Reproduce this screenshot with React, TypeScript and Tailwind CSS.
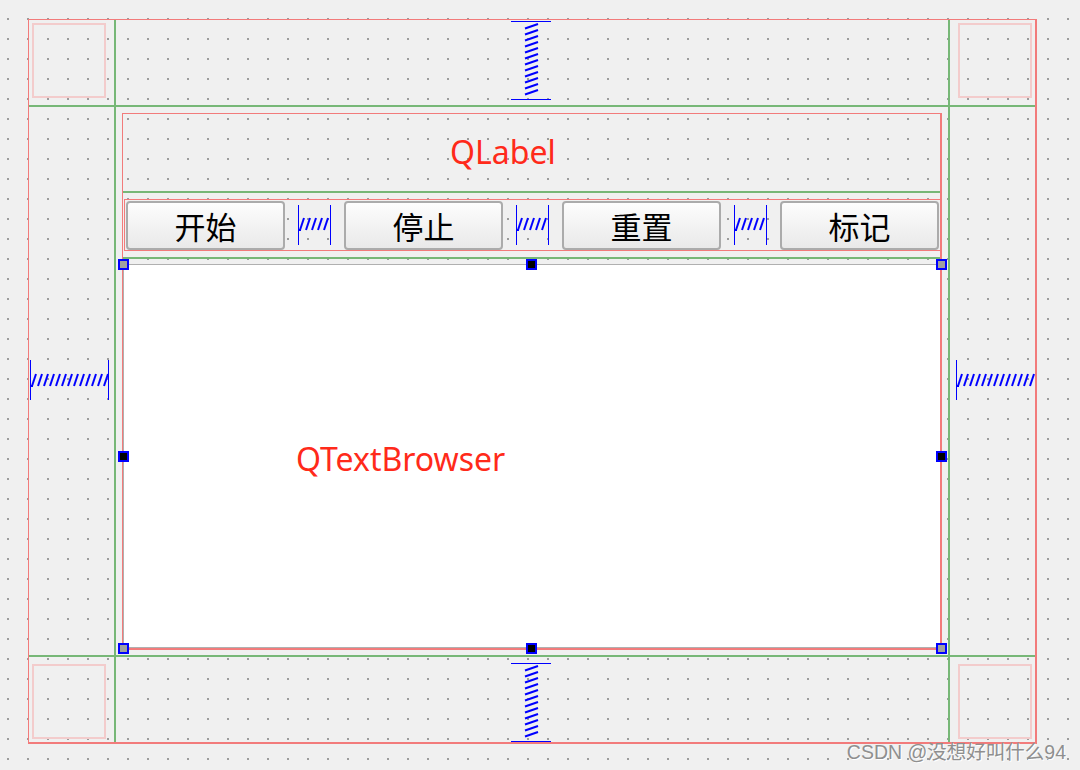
import React from "react";

const BLUE = "#0000ff";

function HSpring({ w, h, zTop, zH }: { w: number; h: number; zTop: number; zH: number }) {
  const strokes: React.ReactNode[] = [];
  for (let i = 0; 2 + i * 6 + 4 <= w - 1; i++) {
    const x = 2 + i * 6;
    strokes.push(<line key={i} x1={x} y1={zTop + zH} x2={x + 4} y2={zTop} />);
  }
  return (
    <svg width={w} height={h} className="block">
      <line x1={0.5} y1={0} x2={0.5} y2={h} stroke={BLUE} strokeWidth={1} />
      <line x1={w - 0.5} y1={0} x2={w - 0.5} y2={h} stroke={BLUE} strokeWidth={1} />
      <line x1={1} y1={zTop + zH} x2={3} y2={zTop + zH} stroke={BLUE} strokeWidth={2} />
      <g stroke={BLUE} strokeWidth={2}>{strokes}</g>
    </svg>
  );
}

function VSpring({ w, h, zLeft, zW }: { w: number; h: number; zLeft: number; zW: number }) {
  const strokes: React.ReactNode[] = [];
  for (let i = 0; 3 + i * 6 + 4.5 <= h - 1; i++) {
    const y = 3 + i * 6;
    strokes.push(<line key={i} x1={zLeft} y1={y + 4.5} x2={zLeft + zW} y2={y} />);
  }
  return (
    <svg width={w} height={h} className="block">
      <line x1={0} y1={0.5} x2={w} y2={0.5} stroke={BLUE} strokeWidth={1} />
      <line x1={0} y1={h - 0.5} x2={w} y2={h - 0.5} stroke={BLUE} strokeWidth={1} />
      <g stroke={BLUE} strokeWidth={2}>{strokes}</g>
    </svg>
  );
}

function CornerBox() {
  return <div className="w-[74px] h-[75px] border-2 border-[#f3cccc]" />;
}

function Btn({ label }: { label: string }) {
  return (
    <div className="mt-[2px] w-[159px] h-[49px] shrink-0 rounded-[4px] border-2 border-[#ababab] bg-linear-to-b from-[#fdfdfd] to-[#e9e9e9] flex items-center justify-center text-[31px] leading-none text-black font-['Noto_Sans_CJK_SC',sans-serif]">
      {label}
    </div>
  );
}

function GapSpring() {
  return (
    <div className="w-[59px] shrink-0 flex justify-center mt-[6px]">
      <HSpring w={33} h={40} zTop={13} zH={12} />
    </div>
  );
}

function Handle({ pos, mid }: { pos: string; mid?: boolean }) {
  return (
    <div
      className={
        "absolute w-[11px] h-[11px] border-2 border-[#0000ff] " +
        (mid ? "bg-black " : "bg-[#a0a0a0] ") +
        pos
      }
    />
  );
}

export default function App() {
  return (
    <div className="relative w-[1080px] h-[770px] bg-[#f0f0f0] overflow-hidden font-['Noto_Sans','Noto_Sans_CJK_SC',sans-serif]">
      {/* dot grid */}
      <svg className="absolute inset-0" width={1080} height={770}>
        <defs>
          <pattern id="dots" x={7} y={18} width={20} height={20} patternUnits="userSpaceOnUse">
            <rect x={0} y={0} width={2} height={2} fill="#9c9c9c" />
          </pattern>
        </defs>
        <rect width={1080} height={770} fill="url(#dots)" />
      </svg>

      <div className="relative pl-[28px] pt-[19px]">
        <div className="relative w-[1009px] h-[725px] grid grid-cols-[86px_834px_89px] grid-rows-[86px_550px_89px]">
          {/* row 0 */}
          <div className="pl-[4px] pt-[4px]">
            <CornerBox />
          </div>
          <div className="flex justify-center pt-[2px]">
            <VSpring w={40} h={79} zLeft={14} zW={13} />
          </div>
          <div className="pl-[10px] pt-[4px]">
            <CornerBox />
          </div>

          {/* row 1 */}
          <div className="flex items-center pl-[2px]">
            <HSpring w={79} h={40} zTop={14} zH={12} />
          </div>
          <div className="pl-[8px] pt-[8px]">
            {/* vertical layout */}
            <div className="relative w-[820px] h-[537px] flex flex-col">
              <div className="h-[78px] flex items-center pl-[328px] text-[32px] leading-none text-[#ff2a1a]">
                QLabel
              </div>
              <div className="h-[8px]" />
              {/* horizontal layout */}
              <div className="relative ml-[2px] w-[817px] h-[52px] flex items-start pl-[2px]">
                <Btn label="开始" />
                <GapSpring />
                <Btn label="停止" />
                <GapSpring />
                <Btn label="重置" />
                <GapSpring />
                <Btn label="标记" />
                <div className="absolute inset-0 border border-[#f27b7b] pointer-events-none" />
              </div>
              <div className="h-[13px]" />
              {/* text browser */}
              <div className="relative ml-[1px] w-[818px] h-[384px] bg-white border border-[#b0b0b0] flex items-center pl-[172px] pt-[6px]">
                <span className="text-[32px] leading-none text-[#ff2a1a]">QTextBrowser</span>
              </div>

              {/* green separators */}
              <div className="absolute left-0 right-0 top-[78px] h-[2px] bg-[#77b777]" />
              <div className="absolute left-0 right-0 top-[144px] h-[2px] bg-[#77b777]" />
              {/* vbox red frame */}
              <div className="absolute inset-0 border-l border-t border-r-2 border-b-2 border-[#f27b7b] pointer-events-none" />
              {/* selection handles */}
              <div className="absolute left-[1px] top-[151px] w-[818px] h-[385px] pointer-events-none">
                <Handle pos="left-[-5px] top-[-5px]" />
                <Handle pos="left-[403px] top-[-5px]" mid />
                <Handle pos="left-[813px] top-[-5px]" />
                <Handle pos="left-[-5px] top-[187px]" mid />
                <Handle pos="left-[813px] top-[187px]" mid />
                <Handle pos="left-[-5px] top-[379px]" />
                <Handle pos="left-[403px] top-[379px]" mid />
                <Handle pos="left-[813px] top-[379px]" />
              </div>
            </div>
          </div>
          <div className="flex items-center pl-[8px]">
            <HSpring w={80} h={40} zTop={14} zH={12} />
          </div>

          {/* row 2 */}
          <div className="pl-[4px] pt-[9px]">
            <CornerBox />
          </div>
          <div className="flex justify-center pt-[8px]">
            <VSpring w={40} h={79} zLeft={14} zW={13} />
          </div>
          <div className="pl-[10px] pt-[9px]">
            <CornerBox />
          </div>

          {/* grid lines (designer overlay) */}
          <div className="absolute top-0 bottom-0 left-[86px] w-[2px] bg-[#77b777] pointer-events-none" />
          <div className="absolute top-0 bottom-0 left-[920px] w-[2px] bg-[#77b777] pointer-events-none" />
          <div className="absolute left-0 right-0 top-[86px] h-[2px] bg-[#77b777] pointer-events-none" />
          <div className="absolute left-0 right-0 top-[636px] h-[2px] bg-[#77b777] pointer-events-none" />
          {/* outer grid layout red frame */}
          <div className="absolute inset-0 border-l border-t border-r-2 border-b-2 border-[#f27b7b] pointer-events-none" />
        </div>
      </div>

      {/* watermark */}
      <div className="absolute right-[14px] bottom-[8px] text-[19.5px] leading-none text-[#8f8f8f] [text-shadow:1px_1px_0_#ffffff] font-['Liberation_Sans','Noto_Sans_CJK_SC',sans-serif]">
        CSDN @没想好叫什么94
      </div>
    </div>
  );
}
